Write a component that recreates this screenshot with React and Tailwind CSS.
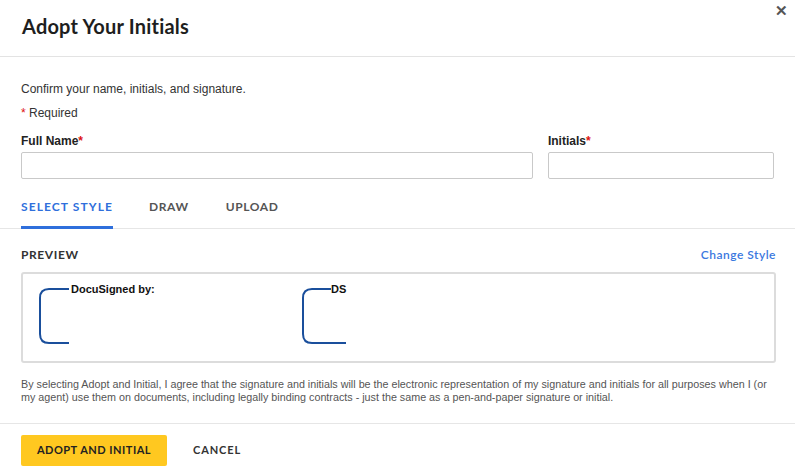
export default function App() {
  const lato = { fontFamily: "Lato, 'Noto Sans', sans-serif" };
  return (
    <div className="w-[801px] h-[469px] bg-white overflow-hidden relative" style={{ fontFamily: "'Liberation Sans', Arial, sans-serif" }}>
      <div className="w-[795px] h-full flex flex-col">
        <div className="h-[57px] shrink-0 border-b border-[#e3e3e3] flex items-center pl-[22px] relative">
          <h1 className="text-[20px] font-bold text-[#1e1e1e] tracking-[0.2px] mt-[-4px]" style={lato}>Adopt Your Initials</h1>
          <span className="absolute right-[7px] top-[3px] text-[#555] text-[15px] font-bold leading-none" style={lato}>✕</span>
        </div>
        <div className="px-[21px] pt-[25px] shrink-0">
          <p className="text-[12px] text-[#333] leading-[14px]">Confirm your name, initials, and signature.</p>
          <p className="text-[12px] text-[#333] leading-[14px] mt-[10px]"><span className="text-[#d11]">*</span> Required</p>
          <div className="flex gap-[15px] mt-[14px]">
            <div className="w-[514px]">
              <div className="text-[12px] font-bold text-[#222] leading-[14px]">Full Name<span className="text-[#d11]">*</span></div>
              <div className="mt-[4px] h-[27px] border border-[#c9c9c9] rounded-[2px]"></div>
            </div>
            <div className="w-[227px]">
              <div className="text-[12px] font-bold text-[#222] leading-[14px]">Initials<span className="text-[#d11]">*</span></div>
              <div className="mt-[4px] h-[27px] border border-[#c9c9c9] rounded-[2px]"></div>
            </div>
          </div>
        </div>
        <div className="shrink-0 border-b border-[#e6e6e6] px-[21px] mt-[19px] flex gap-[36px]" style={lato}>
          <div className="text-[12px] font-bold tracking-[1.1px] text-[#2f6fdc] pb-[10px] border-b-[3px] border-[#2f6fdc] mb-[-1px]">SELECT STYLE</div>
          <div className="text-[12px] font-bold tracking-[0.6px] text-[#555] pb-[10px]">DRAW</div>
          <div className="text-[12px] font-bold tracking-[0.6px] text-[#555] pb-[10px] ml-[1px]">UPLOAD</div>
        </div>
        <div className="px-[21px] pt-[17px] shrink-0">
          <div className="flex justify-between items-center w-[755px]">
            <span className="text-[12px] font-bold tracking-[0.6px] text-[#333]" style={lato}>PREVIEW</span>
            <span className="text-[12px] font-semibold tracking-[0.5px] text-[#3a78e0]" style={lato}>Change Style</span>
          </div>
          <div className="mt-[8px] w-[755px] h-[91px] border-2 border-[#dcdcdc] rounded-[3px] flex pt-[13px]">
            <div className="ml-[15px] w-[263px] flex items-start">
              <svg width="32" height="58" viewBox="0 0 32 58" className="shrink-0">
                <path d="M31 2 H11 Q2 2 2 11 V47 Q2 56 11 56 H31" fill="none" stroke="#1a4f9c" strokeWidth="2" />
              </svg>
              <span className="text-[11px] font-bold text-[#111] leading-none mt-[-3px] ml-[1px]">DocuSigned by:</span>
            </div>
            <div className="flex items-start">
              <svg width="46" height="58" viewBox="0 0 46 58" className="shrink-0">
                <path d="M30 2 H11 Q2 2 2 11 V47 Q2 56 11 56 H45" fill="none" stroke="#1a4f9c" strokeWidth="2" />
              </svg>
              <span className="text-[11px] font-bold text-[#111] leading-none mt-[-3px] ml-[-16px]">DS</span>
            </div>
          </div>
          <p className="mt-[15px] text-[10.75px] text-[#555] leading-[13px] whitespace-nowrap" style={{ fontFamily: "'Liberation Sans Narrow', 'Liberation Sans', Arial, sans-serif" }}>
            By selecting Adopt and Initial, I agree that the signature and initials will be the electronic representation of my signature and initials for all purposes when I (or
            <br />
            my agent) use them on documents, including legally binding contracts - just the same as a pen-and-paper signature or initial.
          </p>
        </div>
        <div className="shrink-0 mt-[19px] border-t border-[#e6e6e6] px-[21px] pt-[11px] flex items-center gap-[26px]" style={lato}>
          <button className="h-[31px] w-[146px] bg-[#ffc820] rounded-[2px] text-[11px] font-bold tracking-[0.5px] text-[#222]">ADOPT AND INITIAL</button>
          <span className="text-[11px] font-bold tracking-[0.9px] text-[#333]">CANCEL</span>
        </div>
      </div>
    </div>
  );
}
